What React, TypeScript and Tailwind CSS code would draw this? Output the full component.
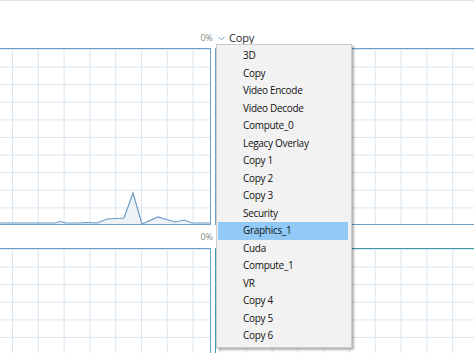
import React from "react";

const engines = [
  "3D",
  "Copy",
  "Video Encode",
  "Video Decode",
  "Compute_0",
  "Legacy Overlay",
  "Copy 1",
  "Copy 2",
  "Copy 3",
  "Security",
  "Graphics_1",
  "Cuda",
  "Compute_1",
  "VR",
  "Copy 4",
  "Copy 5",
  "Copy 6",
];

const selected = "Graphics_1";

// usage samples for the left graph (x, y inside the plot)
const samples: [number, number][] = [
  [0, 174], [55, 174], [60, 172.5], [66, 174], [80, 174], [86, 173.5],
  [97, 174], [107, 170], [124, 169], [133, 144], [142, 175], [158, 168],
  [175, 173], [184, 171], [192, 174], [210, 174],
];

const gridLeft =
  "bg-[linear-gradient(to_right,#dae6f0_1px,transparent_1px),linear-gradient(to_bottom,#dae6f0_1px,transparent_1px)] bg-[size:25.8px_17.6px] bg-[position:12px_0px]";
const gridRight =
  "bg-[linear-gradient(to_right,#dae6f0_1px,transparent_1px),linear-gradient(to_bottom,#dae6f0_1px,transparent_1px)] bg-[size:25.8px_17.6px] bg-[position:4px_0px]";

const Graph: React.FC = () => {
  const line = samples.map(([x, y]) => `${x},${y}`).join(" ");
  const area = `0,175 ${line} 210,175`;
  return (
    <svg className="absolute inset-0" width="210" height="175" viewBox="0 0 210 175">
      <polygon points={area} fill="#eef2f6" />
      <polyline points={line} fill="none" stroke="#6b9bc6" strokeWidth="1.2" />
    </svg>
  );
};

const Chevron: React.FC = () => (
  <svg width="7" height="5" viewBox="0 0 7 5" className="mr-[4px]">
    <path d="M0.5 0.8 L3.5 3.8 L6.5 0.8" fill="none" stroke="#7e9cc0" strokeWidth="1" />
  </svg>
);

export default function App() {
  return (
    <div className="relative w-[474px] h-[353px] overflow-hidden bg-white border-t border-[#e4e4e4] font-['Open_Sans',sans-serif]">
      <div className="flex gap-[4px] pt-[27px]">
        {/* left engine */}
        <div className="w-[211px] shrink-0 flex flex-col">
          <div className="h-[20px] flex items-center justify-end -mr-[2px] text-[9px] text-[#8a8a8a]">0%</div>
          <div className={`relative h-[177px] border-y border-r border-[#6a9fcb] ${gridLeft}`}>
            <Graph />
          </div>
          <div className="h-[23px] flex items-center justify-end -mr-[2px] text-[9px] text-[#8a8a8a]">0%</div>
          <div className={`h-[120px] border-t border-r border-[#6a9fcb] ${gridLeft}`} />
        </div>

        {/* right engine */}
        <div className="w-[300px] shrink-0 flex flex-col">
          <div className="h-[20px] flex items-center pl-[3px] text-[11px] tracking-[-0.2px] text-[#2b2b2b]">
            <Chevron />
            <span>Copy</span>
          </div>
          <div className={`h-[177px] border border-[#6a9fcb] ${gridRight}`} />
          <div className="h-[23px]" />
          <div className={`h-[120px] border-t border-l border-r border-[#3f9aab] ${gridRight}`} />
        </div>
      </div>

      {/* open engine menu */}
      <div className="absolute left-[216px] top-[43px] w-[136px] h-[304px] bg-[#f2f2f2] border border-[#cccccc] shadow-[2px_2px_2px_rgba(0,0,0,0.3)] pt-[2px]">
        {engines.map((name) => (
          <div
            key={name}
            className={`h-[17.5px] ml-[1px] mr-[3px] pl-[25px] flex items-center text-[10px] tracking-[-0.3px] text-[#111111] ${
              name === selected ? "bg-[#91c9f7]" : ""
            }`}
          >
            {name}
          </div>
        ))}
      </div>
    </div>
  );
}
